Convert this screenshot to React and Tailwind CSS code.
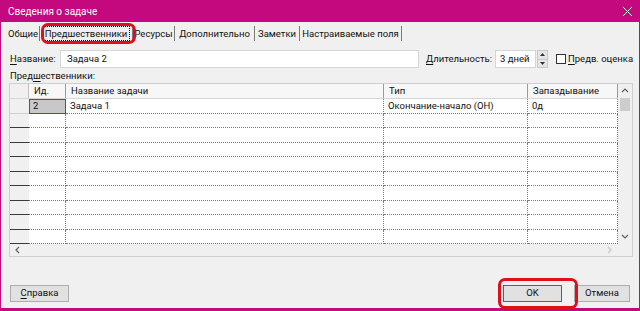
import React from "react";

const font = { fontFamily: 'Roboto, "Noto Sans", sans-serif' };

function U({ children }) {
  return <span className="underline underline-offset-2">{children}</span>;
}

function Tabs() {
  const tabs = [
    { t: "Общие", w: "w-[33px]" },
    { t: "Предшественники", w: "w-[93px]" },
    { t: "Ресурсы", w: "w-[42px]" },
    { t: "Дополнительно", w: "w-[80px]" },
    { t: "Заметки", w: "w-[45px]" },
    { t: "Настраиваемые поля", w: "w-[102px]" },
  ];
  return (
    <div className="flex items-center h-[17px] mt-[3px] pl-[6px]">
      {tabs.map((tab, i) => (
        <div
          key={tab.t}
          className={tab.w + " flex items-center justify-center h-[15px] border-r border-[#7a7a7a] whitespace-nowrap"}
        >
          <span
            className={
              i === 1
                ? "outline-1 outline-dotted outline-black w-[85px] text-center leading-[13px]"
                : "leading-[13px]"
            }
          >
            {tab.t}
          </span>
        </div>
      ))}
    </div>
  );
}

const cols = [
  { w: "w-[37px]", label: "Ид." },
  { w: "w-[318px]", label: "Название задачи" },
  { w: "w-[144px]", label: "Тип" },
  { w: "w-[90px]", label: "Запаздывание" },
];

function Row({ index, values }) {
  return (
    <div className="flex h-[14.5px]">
      <div
        className={
          "w-[19px] bg-[#f0f0f0] border-b " + (index === 0 ? "border-[#d0d0d0]" : "border-[#3a3a3a]")
        }
      />
      {cols.map((c, ci) => (
        <div
          key={ci}
          className={
            c.w +
            " border-b border-r border-dotted border-[#7a7a7a] pl-[4px] leading-[13px] whitespace-nowrap overflow-hidden " +
            (index === 0 && ci === 0 ? "bg-[#c8c8c8] outline-1 outline-[#217346] -outline-offset-1" : "bg-white")
          }
        >
          {values ? values[ci] : ""}
        </div>
      ))}
    </div>
  );
}

function Chevron({ dir }) {
  const d = {
    up: "M1 5 L4 2 L7 5",
    down: "M1 2 L4 5 L7 2",
    left: "M5 1 L2 4 L5 7",
    right: "M2 1 L5 4 L2 7",
  }[dir];
  return (
    <svg width="8" height="8" viewBox="0 0 8 8">
      <path d={d} fill="none" stroke={dir === "right" ? "#c8c8c8" : "#606060"} strokeWidth="1.2" />
    </svg>
  );
}

function Grid() {
  const rows = Array.from({ length: 10 });
  return (
    <div className="ml-[8px] w-[624px] h-[174px] border border-[#cfcfcf] bg-[#f0f0f0] flex flex-col">
      <div className="flex h-[160px]">
        <div className="flex flex-col w-[608px] bg-white">
          <div className="flex h-[15px] bg-[#f7f7f7] border-b border-[#d5d5d5]">
            <div className="w-[19px] bg-[#f0f0f0] border-r border-[#c0c0c0]" />
            {cols.map((c) => (
              <div
                key={c.label}
                className={c.w + " border-r border-[#9a9a9a] pl-[5px] leading-[14px] whitespace-nowrap"}
              >
                {c.label}
              </div>
            ))}
          </div>
          {rows.map((_, i) => (
            <Row key={i} index={i} values={i === 0 ? ["2", "Задача 1", "Окончание-начало (ОН)", "0д"] : null} />
          ))}
        </div>
        <div className="w-[14px] flex flex-col items-center bg-[#f0f0f0]">
          <div className="h-[14px] flex items-center justify-center">
            <Chevron dir="up" />
          </div>
          <div className="w-[10px] h-[13px] bg-[#cdcdcd]" />
          <div className="flex-1" />
          <div className="h-[14px] flex items-center justify-center">
            <Chevron dir="down" />
          </div>
        </div>
      </div>
      <div className="flex h-[13px] items-center">
        <div className="w-[608px] flex items-center justify-between px-[4px]">
          <Chevron dir="left" />
          <Chevron dir="right" />
        </div>
      </div>
    </div>
  );
}

function Button({ children, primary }) {
  return (
    <div
      className={
        "h-[17px] flex items-center justify-center bg-[#e1e1e1] border " +
        (primary ? "w-[59px] border-[#0078d7]" : "border-[#adadad]")
      }
    >
      {children}
    </div>
  );
}

export default function App() {
  return (
    <div className="w-[640px] h-[311px] bg-[#c4087d] flex flex-col text-[#111] text-[9.5px]" style={font}>
      <div className="h-[22px] flex items-center justify-between pl-[8px] pr-[7px] text-white text-[10px]">
        <span>Сведения о задаче</span>
        <svg width="11" height="11" viewBox="0 0 11 11">
          <path d="M1 1 L10 10 M10 1 L1 10" stroke="white" strokeWidth="1" />
        </svg>
      </div>
      <div className="relative flex-1 mx-[1px] mb-[3px] bg-[#f0f0f0] flex flex-col whitespace-nowrap">
        <Tabs />
        <div className="flex items-center h-[18px] mt-[8px] pl-[9px]">
          <span className="w-[50px]">
            <U>Н</U>азвание:
          </span>
          <div className="w-[359px] h-[18px] bg-white border border-[#d6d6d6] pl-[6px] leading-[16px]">
            Задача 2
          </div>
          <span className="ml-[7px] w-[69px]">
            <U>Д</U>лительность:
          </span>
          <div className="w-[41px] h-[18px] bg-white border border-[#d6d6d6] pl-[4px] leading-[16px]">
            3 дней
          </div>
          <div className="ml-[1px] w-[11px] h-[18px] flex flex-col border border-[#c8c8c8] bg-[#e6e6e6]">
            <div className="flex-1 flex items-center justify-center border-b border-[#c8c8c8]">
              <svg width="5" height="3" viewBox="0 0 5 3"><path d="M0 3 L2.5 0 L5 3 Z" fill="#333" /></svg>
            </div>
            <div className="flex-1 flex items-center justify-center">
              <svg width="5" height="3" viewBox="0 0 5 3"><path d="M0 0 L2.5 3 L5 0 Z" fill="#333" /></svg>
            </div>
          </div>
          <div className="ml-[8px] w-[10px] h-[10px] border border-[#333] bg-white" />
          <span className="ml-[2px]">
            <U>П</U>редв. оценка
          </span>
        </div>
        <div className="pl-[9px] mt-[1px] h-[14px] leading-[14px]">
          Пред<U>ш</U>ественники:
        </div>
        <div className="mt-[0px]">
          <Grid />
        </div>
        <div className="flex items-center mt-[28px] px-[9px]">
          <div className="w-[59px]">
            <Button>
              <span><U>С</U>правка</span>
            </Button>
          </div>
          <div className="flex-1" />
          <Button primary>OK</Button>
          <div className="w-[56px] ml-[12px]">
            <Button>Отмена</Button>
          </div>
        </div>
        <div className="absolute left-[40px] top-[1px] w-[95px] h-[21px] border-[3px] border-[#e0101a] rounded-[7px]" />
        <div className="absolute left-[497px] top-[256px] w-[80px] h-[31px] border-[3px] border-[#e0101a] rounded-[7px]" />
      </div>
    </div>
  );
}
